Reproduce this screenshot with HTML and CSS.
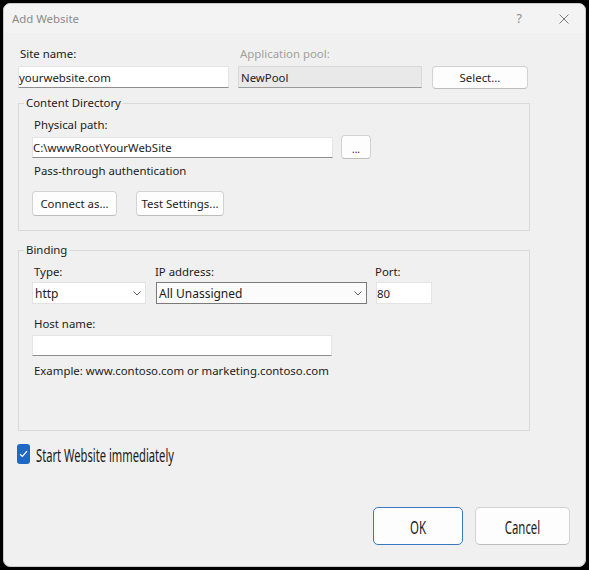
FILE: index.html
```html
<!DOCTYPE html>
<html lang="en">
<head>
<meta charset="utf-8">
<title>Add Website</title>
<link rel="stylesheet" href="styles.css">
</head>
<body>
<div class="dialog">
  <div class="titlebar">
    <span class="title">Add Website</span>
    <span class="help">?</span>
    <span class="close"><svg width="10" height="10" viewBox="0 0 10 10"><path d="M0.5 0.5 L9.5 9.5 M9.5 0.5 L0.5 9.5" stroke="#7a7a7a" stroke-width="1" fill="none"/></svg></span>
  </div>
  <div class="body">
    <div class="site-row">
      <div class="field w-site">
        <div class="lbl">Site name:</div>
        <input class="inp" type="text" value="yourwebsite.com">
      </div>
      <div class="field w-pool">
        <div class="lbl lbl-disabled">Application pool:</div>
        <input class="inp inp-disabled" type="text" value="NewPool" disabled>
      </div>
      <div class="field w-selbtn">
        <button class="btn btn-select">Select...</button>
      </div>
    </div>

    <fieldset class="group group-content">
      <legend>Content Directory</legend>
      <div class="lbl lbl-first">Physical path:</div>
      <div class="path-row">
        <input class="inp inp-path" type="text" value="C:\wwwRoot\YourWebSite">
        <button class="btn btn-browse">...</button>
      </div>
      <div class="lbl lbl-pass">Pass-through authentication</div>
      <div class="btn-row">
        <button class="btn btn-connect">Connect as...</button>
        <button class="btn btn-test">Test Settings...</button>
      </div>
    </fieldset>

    <fieldset class="group group-binding">
      <legend>Binding</legend>
      <div class="bind-row">
        <div class="field w-type">
          <div class="lbl lbl-type">Type:</div>
          <div class="sel sel-type"><span>http</span><svg width="8" height="5" viewBox="0 0 8 5"><path d="M0.5 0.5 L4 4 L7.5 0.5" stroke="#606060" stroke-width="1" fill="none"/></svg></div>
        </div>
        <div class="field w-ip">
          <div class="lbl lbl-ip">IP address:</div>
          <div class="sel sel-ip"><span>All Unassigned</span><svg width="8" height="5" viewBox="0 0 8 5"><path d="M0.5 0.5 L4 4 L7.5 0.5" stroke="#606060" stroke-width="1" fill="none"/></svg></div>
        </div>
        <div class="field w-port">
          <div class="lbl lbl-port">Port:</div>
          <input class="inp inp-port" type="text" value="80">
        </div>
      </div>
      <div class="lbl lbl-host">Host name:</div>
      <input class="inp inp-host" type="text" value="">
      <div class="lbl lbl-example">Example: www.contoso.com or marketing.contoso.com</div>
    </fieldset>

    <div class="check-row">
      <span class="checkbox"><svg width="9" height="8" viewBox="0 0 9 8"><path d="M1 4.2 L3.4 6.5 L8 1.2" stroke="#ffffff" stroke-width="1.2" fill="none"/></svg></span>
      <span class="check-text">Start Website immediately</span>
    </div>

    <div class="actions">
      <button class="btn btn-big btn-ok"><span class="tall">OK</span></button>
      <button class="btn btn-big btn-cancel"><span class="tall">Cancel</span></button>
    </div>
  </div>
</div>
</body>
</html>
```

FILE: styles.css
```css
html, body {
  margin: 0;
  padding: 0;
}
body {
  background: #000;
  font-family: "Noto Sans", "Open Sans", sans-serif;
  font-size: 11.4px;
  color: #1b1b1b;
}
.dialog {
  width: 583px;
  height: 564px;
  margin: 3px 0 0 3px;
  box-sizing: border-box;
  border: 1px solid #c9c9c9;
  border-radius: 7px;
  background: #f0f0f0;
  overflow: hidden;
  display: flex;
  flex-direction: column;
}
.titlebar {
  height: 29px;
  flex: none;
  display: flex;
  align-items: center;
  background: #f3f3f3;
}
.title {
  margin-left: 8px;
  color: #8a8a8a;
  font-size: 11.4px;
}
.help {
  margin-left: auto;
  color: #8a8a8a;
  font-size: 12.5px;
}
.close {
  display: flex;
  margin-left: 37px;
  margin-right: 16px;
}
.body {
  flex: 1;
  display: flex;
  flex-direction: column;
  padding: 13px 15px 21px 14px;
}
.lbl {
  line-height: 16px;
  white-space: nowrap;
}
.lbl-disabled {
  color: #a0a0a0;
}
.site-row {
  display: flex;
  align-items: flex-end;
  gap: 9px;
}
.field {
  display: flex;
  flex-direction: column;
}
.site-row .lbl {
  margin-bottom: 4px;
  padding-left: 2px;
}
.w-site { width: 211px; }
.w-pool { width: 184px; }
.w-selbtn { width: 96px; margin-left: 1px; }

.inp {
  box-sizing: border-box;
  height: 22px;
  margin: 0;
  padding: 0;
  border: 1px solid #e4e4e4;
  border-bottom-color: #8e8e8e;
  border-radius: 0;
  background: #fff;
  font: inherit;
  color: #1b1b1b;
  outline: none;
}
.inp-disabled {
  background: #e9e9e9;
  border-color: #d8d8d8;
  border-bottom-color: #9a9a9a;
  color: #1b1b1b;
  padding-left: 2px;
}
.btn {
  box-sizing: border-box;
  margin: 0;
  padding: 0;
  border: 1px solid #d2d2d2;
  border-bottom-color: #bdbdbd;
  border-radius: 4px;
  background: #fdfdfd;
  font: inherit;
  color: #1b1b1b;
}
.btn-select {
  width: 96px;
  height: 23px;
  margin-bottom: -1px;
}

.group {
  box-sizing: border-box;
  width: 512px;
  margin: 0;
  min-width: 0;
  border: 1px solid #d9d9d9;
}
.group legend {
  padding: 0 2px;
  margin-left: -8px;
  line-height: 16px;
}
.group-content {
  margin-top: 7px;
  padding: 0 0 14px 13px;
}
.lbl-first {
  margin-top: 6px;
  padding-left: 2px;
}
.path-row {
  display: flex;
  align-items: center;
  height: 24px;
  margin-top: 2px;
}
.inp-path {
  width: 301px;
  height: 21px;
}
.btn-browse {
  width: 30px;
  height: 24px;
  margin-left: 8px;
  font-size: 10px;
  line-height: 10px;
  padding-top: 4px;
}
.lbl-pass {
  margin-top: 4px;
  padding-left: 2px;
}
.btn-row {
  display: flex;
  gap: 19px;
  margin-top: 12px;
}
.btn-connect {
  width: 85px;
  height: 25px;
}
.btn-test {
  width: 88px;
  height: 25px;
}

.group-binding {
  margin-top: 11px;
  padding: 0 0 51px 13px;
}
.bind-row {
  display: flex;
  margin-top: 6px;
}
.bind-row .lbl {
  margin-bottom: 2px;
}
.w-type { width: 114px; }
.w-ip { width: 211px; margin-left: 10px; }
.w-port { width: 56px; margin-left: 9px; }
.lbl-type { padding-left: 2px; }
.lbl-ip { margin-left: -1px; }
.lbl-port { margin-left: -1px; }
.sel {
  box-sizing: border-box;
  height: 22px;
  display: flex;
  align-items: center;
  justify-content: space-between;
  background: #fff;
  padding: 0 4px 0 2px;
  font-size: 12px;
}
.sel-type {
  border: 1px solid #e2e2e2;
}
.sel-ip {
  border: 1px solid #7a7a7a;
  background: #fbfbfb;
}
.sel svg {
  margin-top: 1px;
}
.inp-port {
  width: 56px;
  border-bottom-color: #e4e4e4;
}
.lbl-host {
  margin-top: 12px;
  padding-left: 2px;
}
.inp-host {
  width: 300px;
  height: 21px;
  margin-top: 3px;
}
.lbl-example {
  margin-top: 7px;
  padding-left: 2px;
}

.check-row {
  display: flex;
  align-items: center;
  height: 20px;
  margin-top: 13px;
  margin-left: -1px;
}
.checkbox {
  width: 13px;
  height: 20px;
  box-sizing: border-box;
  border-radius: 3px;
  background: #1f68c6;
  display: flex;
  align-items: center;
  justify-content: center;
}
.check-text {
  display: inline-block;
  margin-left: 6px;
  font-size: 11.2px;
  transform: scaleY(1.6);
  color: #1b1b1b;
}

.actions {
  margin-top: auto;
  display: flex;
  justify-content: flex-end;
  gap: 12px;
}
.btn-big {
  height: 38px;
  border-radius: 5px;
}
.btn-ok {
  width: 90px;
  border-color: #3a78c0;
}
.btn-cancel {
  width: 95px;
}
.tall {
  display: inline-block;
  transform: scaleY(1.6);
  font-size: 11.4px;
}
```
